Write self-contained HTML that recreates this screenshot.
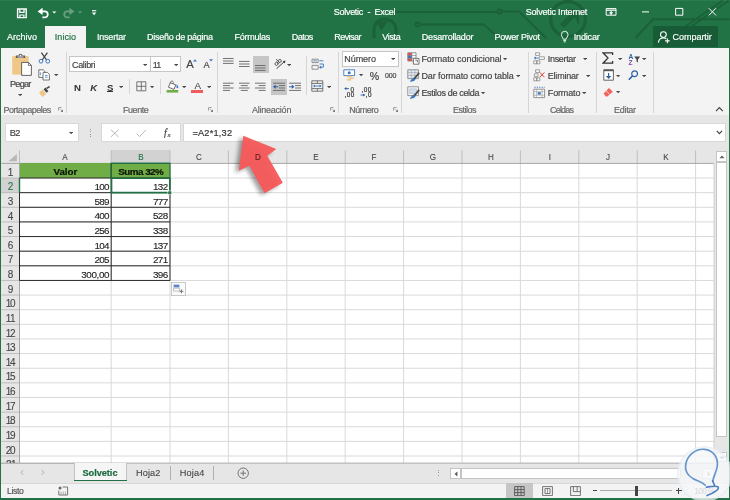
<!DOCTYPE html>
<html><head><meta charset="utf-8"><title>Solvetic - Excel</title>
<style>
html,body{margin:0;padding:0}
body{width:730px;height:500px;overflow:hidden;position:relative;background:#217346;font-family:"Liberation Sans",sans-serif}
#app{position:absolute;left:0;top:0;width:730px;height:500px;overflow:hidden;will-change:transform}
#app div,#app svg,#app span.t{position:absolute;box-sizing:border-box}
span.t{white-space:pre;-webkit-text-stroke:0.18px currentColor}
</style></head>
<body><div id="app">
<div style="left:0px;top:0px;width:730px;height:48.2px;background:#217346;"></div>
<div style="left:0px;top:0px;width:730px;height:1px;background:#2b7c50;"></div>
<svg style="left:0px;top:0px;" width="730" height="48" viewBox="0 0 730 48"><g fill="none" stroke="#1b6139" stroke-width="2" stroke-linecap="round">
<path d="M396 12H497"/><circle cx="499.5" cy="11.5" r="2" />
<path d="M502 11.5H519L546 38"/>
<path d="M420 24.6H484L499 38"/><circle cx="417.5" cy="24.6" r="2"/>
<path d="M653 19.2H729"/><path d="M653 19.2L636 37.5"/>
<path d="M728 1L692 26"/><path d="M722 1L686 26"/>
</g>
<g fill="none" stroke="#1b6139" stroke-width="3.2">
<path d="M374 38V30A11 11 0 0 1 396 30V38"/>
<circle cx="568" cy="19" r="17.4"/>
</g>
<g fill="#1b6139"><path d="M377 22L388 21L381 31Z"/><path d="M563 9H579V25L574.5 17L564 28L560 24L571 13.5Z"/></g>
</svg>
<svg style="left:0px;top:0px;" width="110" height="26" viewBox="0 0 110 26"><g fill="none" stroke="#fff" stroke-width="1.4">
<path d="M17.6 9H26.2V17.6H17.6Z"/><path d="M19.8 9.4V12.4H24V9.4" stroke-width="1.3"/><path d="M19.9 17.4V15H23.9V17.4" stroke-width="1.2"/>
</g>
<path d="M19.4 9H24.4V12.4H19.4Z" fill="none"/>
<g fill="none" stroke="#fff" stroke-width="1.7" stroke-linejoin="miter">
<path d="M40 11.4H44.6A3.2 3 0 0 1 44.6 17.4H42.4"/>
</g>
<path d="M37.6 11.4L42.6 7.8V15Z" fill="#fff"/>
<g opacity="0.32">
<path d="M72 11.4H67.4A3.2 3 0 0 0 67.4 17.4H69.6" fill="none" stroke="#fff" stroke-width="1.7"/>
<path d="M74.4 11.4L69.4 7.8V15Z" fill="#fff"/>
<path d="M78.2 11.4H82L80.1 13.4Z" fill="#fff"/>
</g>
<path d="M52.2 11.4H56.4L54.3 13.6Z" fill="#fff"/>
<path d="M92 10.7H96.2" stroke="#fff" stroke-width="1.1" fill="none"/>
<path d="M91.9 12.5H96.3L94.1 15.3Z" fill="#fff"/>
</svg>
<span id="t0" class="t" style="font-size:9px;color:#fff;top:7.1px;line-height:10.8px;letter-spacing:-0.29px;left:333.8px;">Solvetic  -  Excel</span>
<span id="t1" class="t" style="font-size:9px;color:#fff;top:7.1px;line-height:10.8px;letter-spacing:-0.178px;left:525.7px;">Solvetic Internet</span>
<svg style="left:0px;top:0px;" width="730" height="26" viewBox="0 0 730 26"><g fill="none" stroke="#fff" stroke-width="1">
<path d="M606.2 8.6H616V15.2H606.2Z"/><path d="M606.2 10.2H616" stroke-width="1.2"/>
<path d="M642 11.9H649"/>
<path d="M675.6 8.4H682.8V15.2H675.6Z"/>
<path d="M708.8 8.2L716 15.4M716 8.2L708.8 15.4"/>
</g>
<path d="M611.1 10.9L613.4 13.2H612V14.4H610.2V13.2H608.8Z" fill="#fff"/>
</svg>
<div style="left:45.2px;top:26.2px;width:40.8px;height:22.2px;background:#f3f3f3;"></div>
<span id="t2" class="t" style="font-size:9px;color:#fff;top:32.2px;line-height:10.8px;letter-spacing:-0.003px;left:7px;">Archivo</span>
<span id="t3" class="t" style="font-size:9px;color:#217346;top:32.2px;line-height:10.8px;letter-spacing:0.037px;left:54.8px;">Inicio</span>
<span id="t4" class="t" style="font-size:9px;color:#fff;top:32.2px;line-height:10.8px;letter-spacing:-0.188px;left:96.9px;">Insertar</span>
<span id="t5" class="t" style="font-size:9px;color:#fff;top:32.2px;line-height:10.8px;letter-spacing:-0.271px;left:147px;">Diseño de página</span>
<span id="t6" class="t" style="font-size:9px;color:#fff;top:32.2px;line-height:10.8px;letter-spacing:-0.245px;left:234.5px;">Fórmulas</span>
<span id="t7" class="t" style="font-size:9px;color:#fff;top:32.2px;line-height:10.8px;letter-spacing:-0.504px;left:291.8px;">Datos</span>
<span id="t8" class="t" style="font-size:9px;color:#fff;top:32.2px;line-height:10.8px;letter-spacing:-0.569px;left:334.3px;">Revisar</span>
<span id="t9" class="t" style="font-size:9px;color:#fff;top:32.2px;line-height:10.8px;letter-spacing:-0.34px;left:382.3px;">Vista</span>
<span id="t10" class="t" style="font-size:9px;color:#fff;top:32.2px;line-height:10.8px;letter-spacing:-0.194px;left:421.8px;">Desarrollador</span>
<span id="t11" class="t" style="font-size:9px;color:#fff;top:32.2px;line-height:10.8px;letter-spacing:-0.243px;left:494.4px;">Power Pivot</span>
<span id="t12" class="t" style="font-size:9px;color:#fff;top:32.2px;line-height:10.8px;letter-spacing:-0.186px;left:573.8px;">Indicar</span>
<svg style="left:559px;top:30px;" width="12" height="14" viewBox="0 0 12 14"><g fill="none" stroke="#fff" stroke-width="0.9"><path d="M4.2 9.2C4.2 7.6 2.4 6.8 2.4 4.6A3.3 3.3 0 0 1 9 4.6C9 6.8 7.2 7.6 7.2 9.2Z"/><path d="M4.3 10.6H7.1M4.7 11.9H6.7"/></g></svg>
<div style="left:653.3px;top:26.4px;width:64.3px;height:20.8px;background:#185c37;"></div>
<svg style="left:657px;top:30px;" width="14" height="14" viewBox="0 0 14 14"><g fill="none" stroke="#fff" stroke-width="1.1"><circle cx="6.4" cy="4.6" r="2.9"/><path d="M1.4 12.6C1.8 9.6 3.6 8 6.4 8C7.6 8 8.6 8.3 9.3 8.9"/><path d="M10.4 8.6V13.2M8.1 10.9H12.7"/></g></svg>
<span id="t13" class="t" style="font-size:9px;color:#fff;top:32.2px;line-height:10.8px;letter-spacing:-0.027px;left:672.5px;">Compartir</span>
<div style="left:1.3px;top:48.2px;width:727.5px;height:66.6px;background:#f3f3f3;"></div>
<div style="left:1.3px;top:114.6px;width:727.5px;height:0.9px;background:#d8d8d8;"></div>
<div style="left:1.3px;top:115.4px;width:727.5px;height:368px;background:#e6e6e6;"></div>
<div style="left:65.5px;top:51.6px;width:1px;height:61px;background:#d6d6d6;"></div>
<div style="left:217.0px;top:51.6px;width:1px;height:61px;background:#d6d6d6;"></div>
<div style="left:337.9px;top:51.6px;width:1px;height:61px;background:#d6d6d6;"></div>
<div style="left:401.2px;top:51.6px;width:1px;height:61px;background:#d6d6d6;"></div>
<div style="left:527.5px;top:51.6px;width:1px;height:61px;background:#d6d6d6;"></div>
<div style="left:595.8px;top:51.6px;width:1px;height:61px;background:#d6d6d6;"></div>
<div style="left:652.5px;top:51.6px;width:1px;height:61px;background:#d6d6d6;"></div>
<div style="left:129.1px;top:78.7px;width:1px;height:15.799999999999997px;background:#d6d6d6;"></div>
<div style="left:160.3px;top:78.7px;width:1px;height:15.799999999999997px;background:#d6d6d6;"></div>
<div style="left:305.7px;top:55.7px;width:1px;height:39.3px;background:#d6d6d6;"></div>
<span id="t14" class="t" style="font-size:9px;color:#666;top:104.9px;line-height:10.8px;letter-spacing:-0.495px;left:3.6px;">Portapapeles</span>
<span id="t15" class="t" style="font-size:9px;color:#666;top:104.9px;line-height:10.8px;letter-spacing:-0.446px;left:123px;">Fuente</span>
<span id="t16" class="t" style="font-size:9px;color:#666;top:104.9px;line-height:10.8px;letter-spacing:-0.237px;left:252px;">Alineación</span>
<span id="t17" class="t" style="font-size:9px;color:#666;top:104.9px;line-height:10.8px;letter-spacing:-0.523px;left:349.3px;">Número</span>
<span id="t18" class="t" style="font-size:9px;color:#666;top:104.9px;line-height:10.8px;letter-spacing:-0.503px;left:453px;">Estilos</span>
<span id="t19" class="t" style="font-size:9px;color:#666;top:104.9px;line-height:10.8px;letter-spacing:-0.803px;left:550px;">Celdas</span>
<span id="t20" class="t" style="font-size:9px;color:#666;top:104.9px;line-height:10.8px;letter-spacing:-0.323px;left:614.1px;">Editar</span>
<svg style="left:57.6px;top:107px;" width="6" height="6" viewBox="0 0 6 6"><g fill="none" stroke="#777" stroke-width="0.7"><path d="M0.6 3.6V0.6H3.6"/><path d="M2.4 2.4L4.6 4.6"/></g><path d="M5 2.6V5H2.6Z" fill="#777"/></svg>
<svg style="left:208.4px;top:107px;" width="6" height="6" viewBox="0 0 6 6"><g fill="none" stroke="#777" stroke-width="0.7"><path d="M0.6 3.6V0.6H3.6"/><path d="M2.4 2.4L4.6 4.6"/></g><path d="M5 2.6V5H2.6Z" fill="#777"/></svg>
<svg style="left:329.8px;top:107px;" width="6" height="6" viewBox="0 0 6 6"><g fill="none" stroke="#777" stroke-width="0.7"><path d="M0.6 3.6V0.6H3.6"/><path d="M2.4 2.4L4.6 4.6"/></g><path d="M5 2.6V5H2.6Z" fill="#777"/></svg>
<svg style="left:393.4px;top:107px;" width="6" height="6" viewBox="0 0 6 6"><g fill="none" stroke="#777" stroke-width="0.7"><path d="M0.6 3.6V0.6H3.6"/><path d="M2.4 2.4L4.6 4.6"/></g><path d="M5 2.6V5H2.6Z" fill="#777"/></svg>
<svg style="left:714.5px;top:106px;" width="9" height="7" viewBox="0 0 9 7"><path d="M1 5.2L4.4 1.6L7.8 5.2" fill="none" stroke="#444" stroke-width="1.2"/></svg>
<svg style="left:11px;top:53.4px;" width="22" height="24" viewBox="0 0 22 24"><path d="M1.2 3.2H17.6V21.6H1.2Z" fill="#efc887"/>
<path d="M4.8 5V2.6H7.6A1.9 1.9 0 0 1 11.4 2.6H14.2V5Z" fill="#5f5f5f"/><circle cx="9.5" cy="2.6" r="0.9" fill="#f3f3f3"/><path d="M6.4 4H12.6" stroke="#f3f3f3" stroke-width="0.8"/>
<path d="M10.6 9.4H17.4L20.4 12.4V22.4H10.6Z" fill="#fff" stroke="#555" stroke-width="0.9"/>
<path d="M17.4 9.4V12.4H20.4" fill="none" stroke="#555" stroke-width="0.8"/></svg>
<span id="t21" class="t" style="font-size:9.2px;color:#444;top:79.38px;line-height:11.04px;letter-spacing:-0.783px;left:10px;">Pegar</span>
<svg style="left:17.88px;top:94.1px;" width="4.232" height="2.208" viewBox="0 0 4.232 2.208"><path d="M0 0H4.232L2.116 2.208Z" fill="#484848"/></svg>
<svg style="left:37.5px;top:52.4px;" width="13" height="12" viewBox="0 0 13 12"><g fill="none" stroke-width="1"><path d="M3.4 0.6L8.6 8M9.4 0.6L4.2 8" stroke="#444" stroke-width="1.3"/><circle cx="3" cy="9.2" r="1.9" stroke="#3b78c0"/><circle cx="9.8" cy="9.2" r="1.9" stroke="#3b78c0"/></g></svg>
<svg style="left:37.5px;top:69.4px;" width="13" height="12" viewBox="0 0 13 12"><g fill="#fff" stroke="#555" stroke-width="0.8"><path d="M0.8 0.8H5.2L7 2.6V8.4H0.8Z"/><path d="M5 3.4H9.4L11.4 5.4V11H5Z"/></g><path d="M2.4 3.4V6.2M7 6.4H9.6M7 8.2H9.6" stroke="#3b78c0" stroke-width="0.8" fill="none"/></svg>
<svg style="left:53.88px;top:74.1px;" width="4.232" height="2.208" viewBox="0 0 4.232 2.208"><path d="M0 0H4.232L2.116 2.208Z" fill="#484848"/></svg>
<svg style="left:37.5px;top:86.4px;" width="13" height="12" viewBox="0 0 13 12"><path d="M1 6.6L4.8 3.6L8.2 8L4.4 11Z" fill="#efc887"/><path d="M5.6 3.2L7.6 1.6L10.4 5.2L8.4 6.8Z" fill="#444"/><path d="M8.6 2.4L11.6 0.6" stroke="#444" stroke-width="1.6"/></svg>
<div style="left:69.4px;top:56.2px;width:81.4px;height:16.2px;background:#fff;border:1px solid #c6c6c6;"></div>
<div style="left:150px;top:56.2px;width:31.4px;height:16.2px;background:#fff;border:1px solid #c6c6c6;"></div>
<span id="t22" class="t" style="font-size:9px;color:#444;top:59.9px;line-height:10.8px;letter-spacing:-0.336px;left:72px;">Calibri</span>
<svg style="left:142.58px;top:63.7px;" width="4.232" height="2.208" viewBox="0 0 4.232 2.208"><path d="M0 0H4.232L2.116 2.208Z" fill="#484848"/></svg>
<span id="t23" class="t" style="font-size:9px;color:#444;top:59.9px;line-height:10.8px;letter-spacing:-0.944px;left:152.8px;">11</span>
<svg style="left:173.88px;top:63.7px;" width="4.232" height="2.208" viewBox="0 0 4.232 2.208"><path d="M0 0H4.232L2.116 2.208Z" fill="#484848"/></svg>
<span id="t24" class="t" style="font-size:11.2px;color:#444;top:58.38px;line-height:13.44px;letter-spacing:0.131px;left:186.2px;">A</span>
<svg style="left:193.4px;top:58.6px;" width="4" height="3" viewBox="0 0 4 3"><path d="M0 2.6L2 0.2L4 2.6Z" fill="#3b78c0"/></svg>
<span id="t25" class="t" style="font-size:9.2px;color:#444;top:60.38px;line-height:11.04px;letter-spacing:-0.141px;left:203.4px;">A</span>
<svg style="left:209.2px;top:58.8px;" width="4" height="3" viewBox="0 0 4 3"><path d="M0 0.2H4L2 2.6Z" fill="#3b78c0"/></svg>
<span id="t26" class="t" style="font-size:9.6px;color:#333;top:81.74px;line-height:11.52px;font-weight:bold;letter-spacing:0.062px;left:74px;-webkit-text-stroke:0;">N</span>
<span id="t27" class="t" style="font-size:9.6px;color:#333;top:81.74px;line-height:11.52px;font-weight:bold;font-style:italic;letter-spacing:-0.537px;left:90.2px;-webkit-text-stroke:0;">K</span>
<span id="t28" class="t" style="font-size:9.6px;color:#333;top:81.54px;line-height:11.52px;font-weight:bold;letter-spacing:-0.806px;left:107px;-webkit-text-stroke:0;">S</span>
<div style="left:106.6px;top:91.4px;width:6.2px;height:1px;background:#333;"></div>
<svg style="left:119.28px;top:85.9px;" width="4.232" height="2.208" viewBox="0 0 4.232 2.208"><path d="M0 0H4.232L2.116 2.208Z" fill="#484848"/></svg>
<svg style="left:135.8px;top:81.1px;" width="11" height="11" viewBox="0 0 11 11"><g fill="none" stroke="#666" stroke-width="0.9"><path d="M0.8 0.8H9.8V9.8H0.8Z"/><path d="M5.3 0.8V9.8M0.8 5.3H9.8"/></g></svg>
<svg style="left:150.48px;top:85.9px;" width="4.232" height="2.208" viewBox="0 0 4.232 2.208"><path d="M0 0H4.232L2.116 2.208Z" fill="#484848"/></svg>
<svg style="left:166px;top:80.4px;" width="13" height="13" viewBox="0 0 13 13"><path d="M4.4 2.8L9.8 4.9L8 9.4L2.4 7.2Z" fill="#fff" stroke="#5a5a5a" stroke-width="0.9" stroke-linejoin="round"/><path d="M4.2 3.4C4 1.6 5.4 0.6 6.6 1.2C7.4 1.6 7.4 2.6 7.2 3.6" fill="none" stroke="#5a5a5a" stroke-width="0.8"/><path d="M10.2 4.2C11.8 5 12.6 6.6 12.2 8C11.6 8.4 10.8 8 10.4 7.4C10.8 6.4 10.6 5.2 10.2 4.2Z" fill="#3b78c0"/><path d="M0.6 10H12.2V12.6H0.6Z" fill="#70ad47"/></svg>
<svg style="left:182.08px;top:85.9px;" width="4.232" height="2.208" viewBox="0 0 4.232 2.208"><path d="M0 0H4.232L2.116 2.208Z" fill="#484848"/></svg>
<span id="t29" class="t" style="font-size:9.8px;color:#444;top:80.42px;line-height:11.76px;left:194.4px;-webkit-text-stroke:0.05px currentColor;">A</span>
<div style="left:191.2px;top:90.2px;width:11.8px;height:2.6px;background:#f15b5b;"></div>
<svg style="left:207.28px;top:85.9px;" width="4.232" height="2.208" viewBox="0 0 4.232 2.208"><path d="M0 0H4.232L2.116 2.208Z" fill="#484848"/></svg>
<div style="left:252.8px;top:56.2px;width:16px;height:16.4px;background:#c6c6c6;"></div>
<div style="left:270.8px;top:78.7px;width:16.2px;height:16.8px;background:#c6c6c6;"></div>
<svg style="left:223.2px;top:56px;" width="11" height="16" viewBox="0 0 11 16"><g fill="none" stroke="#6a6a6a" stroke-width="0.95"><path d="M0 2.5H10.6"/><path d="M0 5H10.6"/><path d="M0 7.4H10.6"/></g></svg>
<svg style="left:239.3px;top:56px;" width="11" height="16" viewBox="0 0 11 16"><g fill="none" stroke="#6a6a6a" stroke-width="0.95"><path d="M0 5.4H10.6"/><path d="M0 8H10.6"/><path d="M0 10.5H10.6"/></g></svg>
<svg style="left:255.4px;top:56px;" width="11" height="16" viewBox="0 0 11 16"><g fill="none" stroke="#6a6a6a" stroke-width="0.95"><path d="M0 9.5H10.6"/><path d="M0 12H10.6"/><path d="M0 14.4H10.6"/></g></svg>
<svg style="left:272.6px;top:57px;" width="14" height="14" viewBox="0 0 14 14"><path d="M3.6 11.6L11.6 4.4" stroke="#444" stroke-width="1" fill="none"/><path d="M12.6 3.4L9.6 4.2L11.8 6.4Z" fill="#444"/><g fill="none" stroke="#444" stroke-width="0.8" transform="rotate(-42 5 5)"><circle cx="2.6" cy="5.4" r="1.5"/><path d="M4.1 3.6V7"/><path d="M5.6 1.6V7"/><circle cx="7.1" cy="5.4" r="1.5"/></g></svg>
<svg style="left:287.28px;top:63.7px;" width="4.232" height="2.208" viewBox="0 0 4.232 2.208"><path d="M0 0H4.232L2.116 2.208Z" fill="#484848"/></svg>
<svg style="left:310.6px;top:57.6px;" width="14" height="13" viewBox="0 0 14 13"><g fill="none" stroke="#777" stroke-width="0.8"><path d="M1 1.2H7.2V4.6H1Z"/><path d="M1 7.4H7.2V11.2H1Z"/></g><path d="M8.4 2.8H12.4M8.4 6H12.4V9.2H9.8" fill="none" stroke="#3b78c0" stroke-width="0.9"/><path d="M8 9.2L10.2 7.4V11Z" fill="#3b78c0"/><path d="M2.2 2.9H6" stroke="#3b78c0" stroke-width="0.8"/></svg>
<svg style="left:223.2px;top:80px;" width="11" height="14" viewBox="0 0 11 14"><g fill="none" stroke="#6a6a6a" stroke-width="0.95"><path d="M0 3.2H10.6"/><path d="M0 5.6H7"/><path d="M0 8H10.6"/><path d="M0 10.4H7"/></g></svg>
<svg style="left:239.3px;top:80px;" width="11" height="14" viewBox="0 0 11 14"><g fill="none" stroke="#6a6a6a" stroke-width="0.95"><path d="M0 3.2H10.6"/><path d="M1.8 5.6H8.8"/><path d="M0 8H10.6"/><path d="M1.8 10.4H8.8"/></g></svg>
<svg style="left:255.3px;top:80px;" width="11" height="14" viewBox="0 0 11 14"><g fill="none" stroke="#6a6a6a" stroke-width="0.95"><path d="M0 3.2H10.6"/><path d="M3.6 5.6H10.6"/><path d="M0 8H10.6"/><path d="M3.6 10.4H10.6"/></g></svg>
<svg style="left:272.6px;top:80px;" width="13" height="14" viewBox="0 0 13 14"><g fill="none" stroke="#6a6a6a" stroke-width="0.95"><path d="M0 3.2H12"/><path d="M6 5.6H12"/><path d="M6 8H12"/><path d="M0 10.4H12"/></g><path d="M1.2 6.8H5.4" stroke="#2b5fa6" stroke-width="1"/><path d="M0 6.8L2.6 4.6V9Z" fill="#2b5fa6"/></svg>
<svg style="left:289.2px;top:80px;" width="13" height="14" viewBox="0 0 13 14"><g fill="none" stroke="#6a6a6a" stroke-width="0.95"><path d="M0 3.2H12"/><path d="M6 5.6H12"/><path d="M6 8H12"/><path d="M0 10.4H12"/></g><path d="M0 6.8H4" stroke="#2b5fa6" stroke-width="1"/><path d="M5.4 6.8L2.8 4.6V9Z" fill="#2b5fa6"/></svg>
<svg style="left:311px;top:80.4px;" width="13" height="12" viewBox="0 0 13 12"><g fill="none" stroke="#666" stroke-width="0.9"><path d="M0.8 0.8H11.8V11.2H0.8Z"/><path d="M0.8 3.4H11.8M0.8 8.6H11.8M6.3 0.8V3.4M6.3 8.6V11.2"/></g><path d="M3 6H9.6" stroke="#3b78c0" stroke-width="0.9"/><path d="M2 6L4 4.6V7.4ZM10.6 6L8.6 4.6V7.4Z" fill="#3b78c0"/></svg>
<svg style="left:326.88px;top:85.9px;" width="4.232" height="2.208" viewBox="0 0 4.232 2.208"><path d="M0 0H4.232L2.116 2.208Z" fill="#484848"/></svg>
<div style="left:341.9px;top:50.8px;width:56.8px;height:15.8px;background:#fff;border:1px solid #c6c6c6;"></div>
<span id="t30" class="t" style="font-size:9px;color:#444;top:54.3px;line-height:10.8px;letter-spacing:-0.083px;left:344.3px;">Número</span>
<svg style="left:391.08px;top:58.1px;" width="4.232" height="2.208" viewBox="0 0 4.232 2.208"><path d="M0 0H4.232L2.116 2.208Z" fill="#484848"/></svg>
<svg style="left:343.4px;top:69px;" width="13" height="12" viewBox="0 0 13 12"><path d="M0.8 0.8H11.6V6.6H0.8Z" fill="#fff" stroke="#3b78c0" stroke-width="0.9"/><circle cx="6.2" cy="3.7" r="1.5" fill="#3b78c0"/><g fill="#efc887"><ellipse cx="6" cy="7.6" rx="2.6" ry="0.9"/><ellipse cx="8.6" cy="9.2" rx="2.6" ry="0.9"/><ellipse cx="6" cy="10.8" rx="2.6" ry="0.9"/></g></svg>
<svg style="left:359.48px;top:74.3px;" width="4.232" height="2.208" viewBox="0 0 4.232 2.208"><path d="M0 0H4.232L2.116 2.208Z" fill="#484848"/></svg>
<span id="t31" class="t" style="font-size:10.6px;color:#444;top:69.94px;line-height:12.72px;letter-spacing:-0.022px;left:369.8px;">%</span>
<span id="t32" class="t" style="font-size:7px;color:#444;top:71.7px;line-height:8.4px;letter-spacing:-0.144px;left:385px;">000</span>
<svg style="left:343.6px;top:86.4px;" width="12" height="12" viewBox="0 0 12 12"><path d="M1.6 2.6H5" stroke="#2b5fa6" stroke-width="0.9"/><path d="M0.2 2.6L2.4 1V4.2Z" fill="#2b5fa6"/></svg>
<span id="t33" class="t" style="font-size:6.4px;color:#333;top:86.26px;line-height:7.68px;letter-spacing:0.438px;left:350.4px;">0</span>
<span id="t34" class="t" style="font-size:6.4px;color:#333;top:91.46px;line-height:7.68px;letter-spacing:0.555px;left:344.4px;">,00</span>
<svg style="left:360px;top:86.4px;" width="12" height="12" viewBox="0 0 12 12"><path d="M0.6 9H4" stroke="#2b5fa6" stroke-width="0.9"/><path d="M5.4 9L3.2 7.4V10.6Z" fill="#2b5fa6"/></svg>
<span id="t35" class="t" style="font-size:6.4px;color:#333;top:86.26px;line-height:7.68px;letter-spacing:0.555px;left:361.4px;">,00</span>
<span id="t36" class="t" style="font-size:6.4px;color:#333;top:91.46px;line-height:7.68px;letter-spacing:0.656px;left:365.6px;">,0</span>
<svg style="left:406.8px;top:52px;" width="13" height="13" viewBox="0 0 13 13"><path d="M0.8 0.8H9V9H0.8Z" fill="#fff" stroke="#777" stroke-width="0.8"/><path d="M0.8 0.8H4.9V3.5H0.8Z" fill="#d9534f"/><path d="M0.8 3.5H4.9V6.2H0.8Z" fill="#3b78c0"/><path d="M0.8 6.2H4.9V9H0.8Z" fill="#d9534f"/><path d="M4.9 0.8V9M0.8 3.5H9M0.8 6.2H9" stroke="#777" stroke-width="0.6" fill="none"/><path d="M6.4 6.4H12V12.2H6.4Z" fill="#fff" stroke="#555" stroke-width="0.8"/><path d="M8.2 8.2H10.4V10.4" fill="none" stroke="#555" stroke-width="0.8"/></svg>
<svg style="left:406.8px;top:69px;" width="13" height="13" viewBox="0 0 13 13"><path d="M0.8 0.8H11.4V9.6H0.8Z" fill="#e4eef8" stroke="#777" stroke-width="0.8"/><path d="M0.8 3.6H11.4M0.8 6.4H11.4M4.2 0.8V9.6M7.8 0.8V9.6" stroke="#999" stroke-width="0.6" fill="none"/><path d="M6.4 9.2L11.6 3.2L12.8 4.4L7.8 10.4Z" fill="#4a4a4a"/><path d="M2.8 12.9C3.6 11.4 4.6 9.6 6.4 8.4L8.6 10.6C7.4 12.2 5.4 12.8 2.8 12.9Z" fill="#3b78c0"/></svg>
<svg style="left:406.8px;top:85.8px;" width="13" height="13" viewBox="0 0 13 13"><path d="M0.8 0.8H11.4V9.6H0.8Z" fill="#fff" stroke="#777" stroke-width="0.8"/><path d="M2.6 2.8H9.6V7.6H2.6Z" fill="#cfdff0" stroke="#9ab" stroke-width="0.5"/><path d="M6.4 9.2L11.6 3.2L12.8 4.4L7.8 10.4Z" fill="#4a4a4a"/><path d="M2.8 12.9C3.6 11.4 4.6 9.6 6.4 8.4L8.6 10.6C7.4 12.2 5.4 12.8 2.8 12.9Z" fill="#3b78c0"/></svg>
<span id="t37" class="t" style="font-size:9px;color:#444;top:54.1px;line-height:10.8px;letter-spacing:-0.047px;left:421.4px;">Formato condicional</span>
<svg style="left:503.48px;top:58.1px;" width="4.232" height="2.208" viewBox="0 0 4.232 2.208"><path d="M0 0H4.232L2.116 2.208Z" fill="#484848"/></svg>
<span id="t38" class="t" style="font-size:9px;color:#444;top:70.9px;line-height:10.8px;letter-spacing:-0.078px;left:421.4px;">Dar formato como tabla</span>
<svg style="left:515.88px;top:74.9px;" width="4.232" height="2.208" viewBox="0 0 4.232 2.208"><path d="M0 0H4.232L2.116 2.208Z" fill="#484848"/></svg>
<span id="t39" class="t" style="font-size:9px;color:#444;top:87.7px;line-height:10.8px;letter-spacing:-0.336px;left:421.4px;">Estilos de celda</span>
<svg style="left:481.38px;top:91.7px;" width="4.232" height="2.208" viewBox="0 0 4.232 2.208"><path d="M0 0H4.232L2.116 2.208Z" fill="#484848"/></svg>
<svg style="left:533px;top:52px;" width="13" height="13" viewBox="0 0 13 13"><g fill="#fff" stroke="#777" stroke-width="0.7"><path d="M2.6 0.8H6.6V3.4H2.6Z"/><path d="M6.2 4.8H11.4V7.4H6.2Z"/><path d="M0.8 8.8H3.8V11.8H0.8ZM3.8 8.8H6.8V11.8H3.8Z"/></g><path d="M2 6.1H5.6" stroke="#3b78c0" stroke-width="0.9"/><path d="M0.6 6.1L2.8 4.6V7.6Z" fill="#3b78c0"/></svg>
<svg style="left:533px;top:69px;" width="13" height="13" viewBox="0 0 13 13"><g fill="#fff" stroke="#777" stroke-width="0.7"><path d="M2.6 0.8H6.6V3.4H2.6Z"/><path d="M0.8 8.8H3.8V11.8H0.8ZM3.8 8.8H6.8V11.8H3.8Z"/><path d="M1.4 4.8H5V7.4H1.4Z"/></g><path d="M6.8 3.4L11.4 8.2M11.4 3.4L6.8 8.2" stroke="#e0443a" stroke-width="1" fill="none"/></svg>
<svg style="left:533px;top:85.6px;" width="13" height="13" viewBox="0 0 13 13"><path d="M1.4 1.2H2.6M3.8 1.2H5M6.2 1.2H7.4M8.6 1.2H9.8M10.8 1.2H11.6" stroke="#3b78c0" stroke-width="1.1"/><path d="M0.8 3.2H11.6V11.6H0.8Z" fill="#fff" stroke="#777" stroke-width="0.8"/><path d="M0.8 5.6H11.6M0.8 9.2H11.6M3.4 3.2V11.6M9 3.2V11.6" stroke="#999" stroke-width="0.6" fill="none"/><path d="M4.6 6.2H7.8V8.6H4.6Z" fill="#3b78c0"/></svg>
<span id="t40" class="t" style="font-size:9px;color:#444;top:54.1px;line-height:10.8px;letter-spacing:-0.331px;left:547.8px;">Insertar</span>
<svg style="left:582.68px;top:58.1px;" width="4.232" height="2.208" viewBox="0 0 4.232 2.208"><path d="M0 0H4.232L2.116 2.208Z" fill="#484848"/></svg>
<span id="t41" class="t" style="font-size:9px;color:#444;top:70.9px;line-height:10.8px;letter-spacing:-0.217px;left:547.8px;">Eliminar</span>
<svg style="left:585.68px;top:74.9px;" width="4.232" height="2.208" viewBox="0 0 4.232 2.208"><path d="M0 0H4.232L2.116 2.208Z" fill="#484848"/></svg>
<span id="t42" class="t" style="font-size:9px;color:#444;top:87.7px;line-height:10.8px;letter-spacing:-0.153px;left:547.8px;">Formato</span>
<svg style="left:582.18px;top:91.7px;" width="4.232" height="2.208" viewBox="0 0 4.232 2.208"><path d="M0 0H4.232L2.116 2.208Z" fill="#484848"/></svg>
<svg style="left:602px;top:52px;" width="12" height="12" viewBox="0 0 12 12"><path d="M10.6 3V0.8H1L6 6L1 11.2H10.6V9" fill="none" stroke="#333" stroke-width="1.3"/></svg>
<svg style="left:617.78px;top:58.1px;" width="4.232" height="2.208" viewBox="0 0 4.232 2.208"><path d="M0 0H4.232L2.116 2.208Z" fill="#484848"/></svg>
<svg style="left:602.6px;top:69px;" width="12" height="12" viewBox="0 0 12 12"><path d="M0.8 0.8H10.4V11.2H0.8Z" fill="#fff" stroke="#555" stroke-width="0.9"/><path d="M0.8 1.4H10.4" stroke="#555" stroke-width="1.6"/><path d="M5.6 4V8" stroke="#2b5fa6" stroke-width="1.2"/><path d="M2.8 7L5.6 10L8.4 7Z" fill="#2b5fa6"/></svg>
<svg style="left:616.48px;top:74.9px;" width="4.232" height="2.208" viewBox="0 0 4.232 2.208"><path d="M0 0H4.232L2.116 2.208Z" fill="#484848"/></svg>
<svg style="left:603px;top:86.6px;" width="11" height="10" viewBox="0 0 11 10"><path d="M0.6 6.4L6 1L9.8 4.8L4.4 9.6H2.8Z" fill="#f1625d"/><path d="M3.4 4L6.6 7.4" stroke="#fff" stroke-width="0.7"/></svg>
<svg style="left:616.48px;top:91.3px;" width="4.232" height="2.208" viewBox="0 0 4.232 2.208"><path d="M0 0H4.232L2.116 2.208Z" fill="#484848"/></svg>
<span id="t43" class="t" style="font-size:6.6px;color:#2b5fa6;top:52.54px;line-height:7.92px;font-weight:bold;letter-spacing:-0.166px;left:628.6px;-webkit-text-stroke:0;">A</span>
<span id="t44" class="t" style="font-size:6.6px;color:#7a4fa0;top:58.54px;line-height:7.92px;font-weight:bold;letter-spacing:0.169px;left:628.6px;-webkit-text-stroke:0;">Z</span>
<svg style="left:633.6px;top:55.6px;" width="7" height="7" viewBox="0 0 7 7"><path d="M0.2 0.6H6.2L3.9 3.4V6.4L2.5 5.6V3.4Z" fill="#444"/></svg>
<svg style="left:642.08px;top:58.1px;" width="4.232" height="2.208" viewBox="0 0 4.232 2.208"><path d="M0 0H4.232L2.116 2.208Z" fill="#484848"/></svg>
<svg style="left:628px;top:70px;" width="11" height="11" viewBox="0 0 11 11"><circle cx="6.6" cy="3.8" r="2.9" fill="none" stroke="#2b5fa6" stroke-width="1.2"/><path d="M4.4 6L0.8 9.8" stroke="#2b5fa6" stroke-width="1.6"/></svg>
<svg style="left:642.08px;top:74.9px;" width="4.232" height="2.208" viewBox="0 0 4.232 2.208"><path d="M0 0H4.232L2.116 2.208Z" fill="#484848"/></svg>
<div style="left:4.6px;top:123.4px;width:74px;height:19px;background:#fff;border:1px solid #d8d8d8;"></div>
<span id="t45" class="t" style="font-size:9.2px;color:#444;top:127.78px;line-height:11.04px;letter-spacing:-0.65px;left:9.8px;">B2</span>
<svg style="left:68.88px;top:131.7px;" width="4.232" height="2.208" viewBox="0 0 4.232 2.208"><path d="M0 0H4.232L2.116 2.208Z" fill="#484848"/></svg>
<div style="left:89.6px;top:128.6px;width:1px;height:1px;background:#999;"></div>
<div style="left:89.6px;top:131.2px;width:1px;height:1px;background:#999;"></div>
<div style="left:89.6px;top:133.8px;width:1px;height:1px;background:#999;"></div>
<div style="left:89.6px;top:136.4px;width:1px;height:1px;background:#999;"></div>
<div style="left:100.6px;top:123.4px;width:80.4px;height:19px;background:#fff;border:1px solid #d8d8d8;"></div>
<svg style="left:109.8px;top:129px;" width="10" height="9" viewBox="0 0 10 9"><path d="M0.8 0.6L8.6 8M8.6 0.6L0.8 8" stroke="#b0b0b0" stroke-width="0.9" fill="none"/></svg>
<svg style="left:135.6px;top:129px;" width="11" height="9" viewBox="0 0 11 9"><path d="M0.8 4.6L3.6 7.6L10 0.8" stroke="#b0b0b0" stroke-width="0.9" fill="none"/></svg>
<span id="t46" class="t" style="font-size:10px;color:#444;top:127.3px;line-height:12.0px;font-style:italic;left:164px;font-family:'Liberation Serif',serif;">f</span>
<span id="t47" class="t" style="font-size:7px;color:#444;top:131.1px;line-height:8.4px;font-style:italic;left:167.6px;font-family:'Liberation Serif',serif;">x</span>
<div style="left:183.2px;top:123.3px;width:542.8px;height:19.1px;background:#fff;border:1px solid #d8d8d8;"></div>
<span id="t48" class="t" style="font-size:9.2px;color:#333;top:128.38px;line-height:11.04px;letter-spacing:0.22px;left:192.4px;">=A2*1,32</span>
<svg style="left:716px;top:130px;" width="8" height="6" viewBox="0 0 8 6"><path d="M0.8 0.8L3.4 3.6L6 0.8" fill="none" stroke="#444" stroke-width="1.2"/></svg>
<div style="left:19.5px;top:163.4px;width:694.5px;height:299.6px;background:#fff;"></div>
<div style="left:1.3px;top:149.8px;width:712.7px;height:13.599999999999994px;background:#e6e6e6;"></div>
<div style="left:1.3px;top:163.4px;width:18.2px;height:299.6px;background:#e6e6e6;"></div>
<div style="left:111.2px;top:149.8px;width:58.8px;height:13.599999999999994px;background:#d2d2d2;"></div>
<div style="left:1.3px;top:178.03px;width:18.2px;height:14.63px;background:#d2d2d2;"></div>
<svg style="left:0px;top:0px;" width="730" height="500" viewBox="0 0 730 500"><g fill="none" stroke-width="1"><path d="M19.5 178.03H714" stroke="#d9d9d9"/><path d="M19.5 192.66H714" stroke="#d9d9d9"/><path d="M19.5 207.29H714" stroke="#d9d9d9"/><path d="M19.5 221.92H714" stroke="#d9d9d9"/><path d="M19.5 236.55H714" stroke="#d9d9d9"/><path d="M19.5 251.18H714" stroke="#d9d9d9"/><path d="M19.5 265.81H714" stroke="#d9d9d9"/><path d="M19.5 280.44H714" stroke="#d9d9d9"/><path d="M19.5 295.07H714" stroke="#d9d9d9"/><path d="M19.5 309.7H714" stroke="#d9d9d9"/><path d="M19.5 324.33H714" stroke="#d9d9d9"/><path d="M19.5 338.96H714" stroke="#d9d9d9"/><path d="M19.5 353.59H714" stroke="#d9d9d9"/><path d="M19.5 368.22H714" stroke="#d9d9d9"/><path d="M19.5 382.85H714" stroke="#d9d9d9"/><path d="M19.5 397.48H714" stroke="#d9d9d9"/><path d="M19.5 412.11H714" stroke="#d9d9d9"/><path d="M19.5 426.74H714" stroke="#d9d9d9"/><path d="M19.5 441.37H714" stroke="#d9d9d9"/><path d="M19.5 456.0H714" stroke="#d9d9d9"/><path d="M111.2 163.4V463" stroke="#d9d9d9"/><path d="M170 163.4V463" stroke="#d9d9d9"/><path d="M228.4 163.4V463" stroke="#d9d9d9"/><path d="M286.8 163.4V463" stroke="#d9d9d9"/><path d="M345.2 163.4V463" stroke="#d9d9d9"/><path d="M403.6 163.4V463" stroke="#d9d9d9"/><path d="M462 163.4V463" stroke="#d9d9d9"/><path d="M520.4 163.4V463" stroke="#d9d9d9"/><path d="M578.8 163.4V463" stroke="#d9d9d9"/><path d="M637.2 163.4V463" stroke="#d9d9d9"/><path d="M695.6 163.4V463" stroke="#d9d9d9"/><path d="M19.5 150.3V163.4" stroke="#bdbdbd"/><path d="M111.2 150.3V163.4" stroke="#bdbdbd"/><path d="M170 150.3V163.4" stroke="#bdbdbd"/><path d="M228.4 150.3V163.4" stroke="#bdbdbd"/><path d="M286.8 150.3V163.4" stroke="#bdbdbd"/><path d="M345.2 150.3V163.4" stroke="#bdbdbd"/><path d="M403.6 150.3V163.4" stroke="#bdbdbd"/><path d="M462 150.3V163.4" stroke="#bdbdbd"/><path d="M520.4 150.3V163.4" stroke="#bdbdbd"/><path d="M578.8 150.3V163.4" stroke="#bdbdbd"/><path d="M637.2 150.3V163.4" stroke="#bdbdbd"/><path d="M695.6 150.3V163.4" stroke="#bdbdbd"/><path d="M1.3 178.03H19.5" stroke="#bdbdbd"/><path d="M1.3 192.66H19.5" stroke="#bdbdbd"/><path d="M1.3 207.29H19.5" stroke="#bdbdbd"/><path d="M1.3 221.92H19.5" stroke="#bdbdbd"/><path d="M1.3 236.55H19.5" stroke="#bdbdbd"/><path d="M1.3 251.18H19.5" stroke="#bdbdbd"/><path d="M1.3 265.81H19.5" stroke="#bdbdbd"/><path d="M1.3 280.44H19.5" stroke="#bdbdbd"/><path d="M1.3 295.07H19.5" stroke="#bdbdbd"/><path d="M1.3 309.7H19.5" stroke="#bdbdbd"/><path d="M1.3 324.33H19.5" stroke="#bdbdbd"/><path d="M1.3 338.96H19.5" stroke="#bdbdbd"/><path d="M1.3 353.59H19.5" stroke="#bdbdbd"/><path d="M1.3 368.22H19.5" stroke="#bdbdbd"/><path d="M1.3 382.85H19.5" stroke="#bdbdbd"/><path d="M1.3 397.48H19.5" stroke="#bdbdbd"/><path d="M1.3 412.11H19.5" stroke="#bdbdbd"/><path d="M1.3 426.74H19.5" stroke="#bdbdbd"/><path d="M1.3 441.37H19.5" stroke="#bdbdbd"/><path d="M1.3 456.0H19.5" stroke="#bdbdbd"/><path d="M1.3 163.4H714" stroke="#a6a6a6"/><path d="M19.5 163.4V463" stroke="#a6a6a6"/><path d="M714 163.4V463" stroke="#d0d0d0"/><path d="M1.3 463H714" stroke="#bdbdbd"/><path d="M16.9 154.0V161.20000000000002H8.5Z" fill="#b7b7b7"/></g></svg>
<span id="t49" class="t" style="font-size:9.4px;color:#444;top:151.46px;line-height:11.28px;left:-134.65px;width:400px;text-align:center;transform:scaleX(0.86);transform-origin:50% 50%;-webkit-text-stroke:0.1px currentColor;">A</span>
<span id="t50" class="t" style="font-size:9.4px;color:#217346;top:151.46px;line-height:11.28px;left:-59.4px;width:400px;text-align:center;transform:scaleX(0.86);transform-origin:50% 50%;-webkit-text-stroke:0.1px currentColor;">B</span>
<span id="t51" class="t" style="font-size:9.4px;color:#444;top:151.46px;line-height:11.28px;left:-0.8px;width:400px;text-align:center;transform:scaleX(0.86);transform-origin:50% 50%;-webkit-text-stroke:0.1px currentColor;">C</span>
<span id="t52" class="t" style="font-size:9.4px;color:#444;top:151.46px;line-height:11.28px;left:57.6px;width:400px;text-align:center;transform:scaleX(0.86);transform-origin:50% 50%;-webkit-text-stroke:0.1px currentColor;">D</span>
<span id="t53" class="t" style="font-size:9.4px;color:#444;top:151.46px;line-height:11.28px;left:116.0px;width:400px;text-align:center;transform:scaleX(0.86);transform-origin:50% 50%;-webkit-text-stroke:0.1px currentColor;">E</span>
<span id="t54" class="t" style="font-size:9.4px;color:#444;top:151.46px;line-height:11.28px;left:174.4px;width:400px;text-align:center;transform:scaleX(0.86);transform-origin:50% 50%;-webkit-text-stroke:0.1px currentColor;">F</span>
<span id="t55" class="t" style="font-size:9.4px;color:#444;top:151.46px;line-height:11.28px;left:232.8px;width:400px;text-align:center;transform:scaleX(0.86);transform-origin:50% 50%;-webkit-text-stroke:0.1px currentColor;">G</span>
<span id="t56" class="t" style="font-size:9.4px;color:#444;top:151.46px;line-height:11.28px;left:291.2px;width:400px;text-align:center;transform:scaleX(0.86);transform-origin:50% 50%;-webkit-text-stroke:0.1px currentColor;">H</span>
<span id="t57" class="t" style="font-size:9.4px;color:#444;top:151.46px;line-height:11.28px;left:349.6px;width:400px;text-align:center;transform:scaleX(0.86);transform-origin:50% 50%;-webkit-text-stroke:0.1px currentColor;">I</span>
<span id="t58" class="t" style="font-size:9.4px;color:#444;top:151.46px;line-height:11.28px;left:408.0px;width:400px;text-align:center;transform:scaleX(0.86);transform-origin:50% 50%;-webkit-text-stroke:0.1px currentColor;">J</span>
<span id="t59" class="t" style="font-size:9.4px;color:#444;top:151.46px;line-height:11.28px;left:466.4px;width:400px;text-align:center;transform:scaleX(0.86);transform-origin:50% 50%;-webkit-text-stroke:0.1px currentColor;">K</span>
<span id="t60" class="t" style="font-size:10px;color:#444;top:166.61px;line-height:12.0px;letter-spacing:-0.862px;left:-189.83px;width:400px;text-align:center;-webkit-text-stroke:0.1px currentColor;">1</span>
<span id="t61" class="t" style="font-size:10px;color:#217346;top:181.24px;line-height:12.0px;letter-spacing:-0.862px;left:-189.83px;width:400px;text-align:center;-webkit-text-stroke:0.1px currentColor;">2</span>
<span id="t62" class="t" style="font-size:10px;color:#444;top:195.88px;line-height:12.0px;letter-spacing:-0.862px;left:-189.83px;width:400px;text-align:center;-webkit-text-stroke:0.1px currentColor;">3</span>
<span id="t63" class="t" style="font-size:10px;color:#444;top:210.5px;line-height:12.0px;letter-spacing:-0.862px;left:-189.83px;width:400px;text-align:center;-webkit-text-stroke:0.1px currentColor;">4</span>
<span id="t64" class="t" style="font-size:10px;color:#444;top:225.13px;line-height:12.0px;letter-spacing:-0.862px;left:-189.83px;width:400px;text-align:center;-webkit-text-stroke:0.1px currentColor;">5</span>
<span id="t65" class="t" style="font-size:10px;color:#444;top:239.76px;line-height:12.0px;letter-spacing:-0.862px;left:-189.83px;width:400px;text-align:center;-webkit-text-stroke:0.1px currentColor;">6</span>
<span id="t66" class="t" style="font-size:10px;color:#444;top:254.39px;line-height:12.0px;letter-spacing:-0.862px;left:-189.83px;width:400px;text-align:center;-webkit-text-stroke:0.1px currentColor;">7</span>
<span id="t67" class="t" style="font-size:10px;color:#444;top:269.02px;line-height:12.0px;letter-spacing:-0.862px;left:-189.83px;width:400px;text-align:center;-webkit-text-stroke:0.1px currentColor;">8</span>
<span id="t68" class="t" style="font-size:10px;color:#444;top:283.65px;line-height:12.0px;letter-spacing:-0.862px;left:-189.83px;width:400px;text-align:center;-webkit-text-stroke:0.1px currentColor;">9</span>
<span id="t69" class="t" style="font-size:10px;color:#444;top:298.28px;line-height:12.0px;letter-spacing:-1.225px;left:-190.01px;width:400px;text-align:center;-webkit-text-stroke:0.1px currentColor;">10</span>
<span id="t70" class="t" style="font-size:10px;color:#444;top:312.91px;line-height:12.0px;letter-spacing:-0.491px;left:-189.65px;width:400px;text-align:center;-webkit-text-stroke:0.1px currentColor;">11</span>
<span id="t71" class="t" style="font-size:10px;color:#444;top:327.54px;line-height:12.0px;letter-spacing:-1.225px;left:-190.01px;width:400px;text-align:center;-webkit-text-stroke:0.1px currentColor;">12</span>
<span id="t72" class="t" style="font-size:10px;color:#444;top:342.17px;line-height:12.0px;letter-spacing:-1.225px;left:-190.01px;width:400px;text-align:center;-webkit-text-stroke:0.1px currentColor;">13</span>
<span id="t73" class="t" style="font-size:10px;color:#444;top:356.81px;line-height:12.0px;letter-spacing:-1.225px;left:-190.01px;width:400px;text-align:center;-webkit-text-stroke:0.1px currentColor;">14</span>
<span id="t74" class="t" style="font-size:10px;color:#444;top:371.44px;line-height:12.0px;letter-spacing:-1.225px;left:-190.01px;width:400px;text-align:center;-webkit-text-stroke:0.1px currentColor;">15</span>
<span id="t75" class="t" style="font-size:10px;color:#444;top:386.06px;line-height:12.0px;letter-spacing:-1.225px;left:-190.01px;width:400px;text-align:center;-webkit-text-stroke:0.1px currentColor;">16</span>
<span id="t76" class="t" style="font-size:10px;color:#444;top:400.69px;line-height:12.0px;letter-spacing:-1.225px;left:-190.01px;width:400px;text-align:center;-webkit-text-stroke:0.1px currentColor;">17</span>
<span id="t77" class="t" style="font-size:10px;color:#444;top:415.33px;line-height:12.0px;letter-spacing:-1.225px;left:-190.01px;width:400px;text-align:center;-webkit-text-stroke:0.1px currentColor;">18</span>
<span id="t78" class="t" style="font-size:10px;color:#444;top:429.96px;line-height:12.0px;letter-spacing:-1.225px;left:-190.01px;width:400px;text-align:center;-webkit-text-stroke:0.1px currentColor;">19</span>
<span id="t79" class="t" style="font-size:10px;color:#444;top:444.59px;line-height:12.0px;letter-spacing:-1.225px;left:-190.01px;width:400px;text-align:center;-webkit-text-stroke:0.1px currentColor;">20</span>
<div style="left:1.3px;top:457.6px;width:18.2px;height:5.2px;overflow:hidden;"><span class="t" style="position:absolute;left:-190.4px;width:400px;text-align:center;top:1.2px;font-size:10px;letter-spacing:-0.6px;line-height:12px;color:#444">21</span></div>
<div style="left:19.5px;top:163.4px;width:150.5px;height:14.63px;background:#70ad47;"></div>
<svg style="left:0px;top:0px;" width="730" height="500" viewBox="0 0 730 500"><g fill="none" stroke-width="1"><path d="M19.5 178.03H170" stroke="#2a2a2a"/><path d="M19.5 192.66H170" stroke="#2a2a2a"/><path d="M19.5 207.29H170" stroke="#2a2a2a"/><path d="M19.5 221.92H170" stroke="#2a2a2a"/><path d="M19.5 236.55H170" stroke="#2a2a2a"/><path d="M19.5 251.18H170" stroke="#2a2a2a"/><path d="M19.5 265.81H170" stroke="#2a2a2a"/><path d="M19.5 280.44H170" stroke="#2a2a2a"/><path d="M19.5 178.03V280.44" stroke="#2a2a2a"/><path d="M111.2 178.03V280.44" stroke="#2a2a2a"/><path d="M170 178.03V280.44" stroke="#2a2a2a"/><path d="M111.2 163.4V178.03" stroke="#2a2a2a"/><path d="M111.2 178.03V163.4H170V178.03" stroke="#1e6b3f" stroke-width="1.2"/><path d="M111.5 178.23H169.8V190.46M167 192.66H111.5V178.23" stroke="#217346" stroke-width="1.7"/><path d="M167.8 191.06H171.6V194.46H167.8Z" fill="#217346" stroke="#fff" stroke-width="0.5"/><path d="M19.5 178.03V192.66" stroke="#217346" stroke-width="1.4"/><path d="M111.2 163.4H170" stroke="#217346" stroke-width="1.4"/></g></svg>
<span id="t80" class="t" style="font-size:9.8px;color:#0c1407;top:165.94px;line-height:11.76px;font-weight:bold;letter-spacing:-0.042px;left:-134.67px;width:400px;text-align:center;-webkit-text-stroke:0.2px currentColor;">Valor</span>
<span id="t81" class="t" style="font-size:9.8px;color:#0c1407;top:165.94px;line-height:11.76px;font-weight:bold;letter-spacing:-0.517px;left:-59.26px;width:400px;text-align:center;-webkit-text-stroke:0.2px currentColor;">Suma 32%</span>
<span id="t82" class="t" style="font-size:9.9px;color:#1c1c1c;top:181.1px;line-height:11.88px;letter-spacing:-0.642px;right:621.04px;-webkit-text-stroke:0.12px currentColor;">100</span>
<span id="t83" class="t" style="font-size:9.9px;color:#1c1c1c;top:181.1px;line-height:11.88px;letter-spacing:-0.642px;right:562.44px;-webkit-text-stroke:0.12px currentColor;">132</span>
<span id="t84" class="t" style="font-size:9.9px;color:#1c1c1c;top:195.74px;line-height:11.88px;letter-spacing:-0.642px;right:621.04px;-webkit-text-stroke:0.12px currentColor;">589</span>
<span id="t85" class="t" style="font-size:9.9px;color:#1c1c1c;top:195.74px;line-height:11.88px;letter-spacing:-0.642px;right:562.44px;-webkit-text-stroke:0.12px currentColor;">777</span>
<span id="t86" class="t" style="font-size:9.9px;color:#1c1c1c;top:210.37px;line-height:11.88px;letter-spacing:-0.642px;right:621.04px;-webkit-text-stroke:0.12px currentColor;">400</span>
<span id="t87" class="t" style="font-size:9.9px;color:#1c1c1c;top:210.37px;line-height:11.88px;letter-spacing:-0.642px;right:562.44px;-webkit-text-stroke:0.12px currentColor;">528</span>
<span id="t88" class="t" style="font-size:9.9px;color:#1c1c1c;top:225.0px;line-height:11.88px;letter-spacing:-0.642px;right:621.04px;-webkit-text-stroke:0.12px currentColor;">256</span>
<span id="t89" class="t" style="font-size:9.9px;color:#1c1c1c;top:225.0px;line-height:11.88px;letter-spacing:-0.642px;right:562.44px;-webkit-text-stroke:0.12px currentColor;">338</span>
<span id="t90" class="t" style="font-size:9.9px;color:#1c1c1c;top:239.62px;line-height:11.88px;letter-spacing:-0.642px;right:621.04px;-webkit-text-stroke:0.12px currentColor;">104</span>
<span id="t91" class="t" style="font-size:9.9px;color:#1c1c1c;top:239.62px;line-height:11.88px;letter-spacing:-0.642px;right:562.44px;-webkit-text-stroke:0.12px currentColor;">137</span>
<span id="t92" class="t" style="font-size:9.9px;color:#1c1c1c;top:254.25px;line-height:11.88px;letter-spacing:-0.642px;right:621.04px;-webkit-text-stroke:0.12px currentColor;">205</span>
<span id="t93" class="t" style="font-size:9.9px;color:#1c1c1c;top:254.25px;line-height:11.88px;letter-spacing:-0.642px;right:562.44px;-webkit-text-stroke:0.12px currentColor;">271</span>
<span id="t94" class="t" style="font-size:9.9px;color:#1c1c1c;top:268.88px;line-height:11.88px;letter-spacing:-0.364px;right:620.76px;-webkit-text-stroke:0.12px currentColor;">300,00</span>
<span id="t95" class="t" style="font-size:9.9px;color:#1c1c1c;top:268.88px;line-height:11.88px;letter-spacing:-0.642px;right:562.44px;-webkit-text-stroke:0.12px currentColor;">396</span>
<div style="left:171.4px;top:282.2px;width:14.6px;height:13.6px;background:#fafafa;border:1px solid #c8c8c8;"></div>
<svg style="left:173.4px;top:284px;" width="11" height="10" viewBox="0 0 11 10"><path d="M0.6 0.6H6.4V3.4H0.6Z" fill="#5b89c4"/><path d="M0.6 4.2H6.4V7H0.6Z" fill="#fff" stroke="#999" stroke-width="0.6"/><path d="M8.4 5.4V9.2M6.5 7.3H10.3" stroke="#666" stroke-width="0.9"/></svg>
<div style="left:716.2px;top:151.2px;width:10.8px;height:10.6px;background:#fff;border:1px solid #c4c4c4;"></div>
<svg style="left:718.6px;top:154.6px;" width="6" height="4" viewBox="0 0 6 4"><path d="M0.4 3.2L3 0.4L5.6 3.2Z" fill="#666"/></svg>
<div style="left:716.2px;top:162px;width:10.8px;height:275.4px;background:#fff;border:1px solid #c4c4c4;"></div>
<div style="left:716.2px;top:451.8px;width:10.8px;height:10.4px;background:#fff;border:1px solid #c4c4c4;"></div>
<svg style="left:718.8px;top:456.2px;" width="6" height="4" viewBox="0 0 6 4"><path d="M0.4 0.6H5.6L3 3.4Z" fill="#777"/></svg>
<div style="left:1.3px;top:463.4px;width:727.5px;height:19.6px;background:#e6e6e6;"></div>
<div style="left:1.3px;top:462.7px;width:712.7px;height:1px;background:#c2c2c2;"></div>
<div style="left:1.3px;top:462.6px;width:73px;height:1px;background:#b4b4b4;"></div>
<div style="left:74.2px;top:463px;width:52.4px;height:18.4px;background:#f5f5f5;border-left:1px solid #c2c2c2;border-right:1px solid #c2c2c2;"></div>
<div style="left:74.2px;top:479.6px;width:52.4px;height:1.6px;background:#217346;"></div>
<span id="t96" class="t" style="font-size:9.2px;color:#1c6a3f;top:467.58px;line-height:11.04px;font-weight:bold;letter-spacing:-0.033px;left:82.5px;-webkit-text-stroke:0.2px currentColor;">Solvetic</span>
<span id="t97" class="t" style="font-size:9.2px;color:#444;top:467.58px;line-height:11.04px;letter-spacing:0.146px;left:135.9px;-webkit-text-stroke:0.1px currentColor;">Hoja2</span>
<span id="t98" class="t" style="font-size:9.2px;color:#444;top:467.58px;line-height:11.04px;letter-spacing:0.171px;left:179.7px;-webkit-text-stroke:0.1px currentColor;">Hoja4</span>
<div style="left:170px;top:465.6px;width:1px;height:14px;background:#b0b0b0;"></div>
<div style="left:213px;top:465.6px;width:1px;height:14px;background:#b0b0b0;"></div>
<svg style="left:18px;top:467px;" width="30" height="11" viewBox="0 0 30 11"><g fill="none" stroke="#c0c0c0" stroke-width="1.1"><path d="M5.4 3.2L3 5.4L5.4 7.6"/><path d="M23.6 3.2L26 5.4L23.6 7.6"/></g></svg>
<svg style="left:237.4px;top:466.6px;" width="13" height="13" viewBox="0 0 13 13"><g fill="none" stroke="#666" stroke-width="0.9"><circle cx="6.2" cy="6.2" r="5.2"/><path d="M6.2 3.4V9M3.4 6.2H9"/></g></svg>
<div style="left:438.2px;top:470px;width:1px;height:1px;background:#999;"></div>
<div style="left:438.2px;top:472.4px;width:1px;height:1px;background:#999;"></div>
<div style="left:438.2px;top:474.8px;width:1px;height:1px;background:#999;"></div>
<div style="left:450.2px;top:468px;width:11.2px;height:10.8px;background:#fff;border:1px solid #c4c4c4;"></div>
<svg style="left:453.6px;top:470.6px;" width="4" height="6" viewBox="0 0 4 6"><path d="M3.4 0.4L0.6 2.9L3.4 5.4Z" fill="#555"/></svg>
<div style="left:461.2px;top:468px;width:219.6px;height:10.8px;background:#fff;border:1px solid #c4c4c4;"></div>
<div style="left:702.4px;top:468px;width:11.2px;height:10.8px;background:#fff;border:1px solid #c4c4c4;"></div>
<svg style="left:706.6px;top:470.6px;" width="4" height="6" viewBox="0 0 4 6"><path d="M0.6 0.4L3.4 2.9L0.6 5.4Z" fill="#777"/></svg>
<div style="left:1.3px;top:483px;width:727.5px;height:15.4px;background:#f3f3f3;"></div>
<div style="left:1.3px;top:482.6px;width:727.5px;height:0.8px;background:#d8d8d8;"></div>
<span id="t99" class="t" style="font-size:8.6px;color:#555;top:486.34px;line-height:10.32px;letter-spacing:-0.339px;left:7px;">Listo</span>
<svg style="left:57.6px;top:486.4px;" width="11" height="10" viewBox="0 0 11 10"><circle cx="2" cy="2" r="1.5" fill="#666"/><path d="M4.6 1H9.6V9H0.8V4.6" fill="none" stroke="#666" stroke-width="0.9"/><path d="M3 5.6V9M5.2 5.6V9M7.4 5.6V9" stroke="#999" stroke-width="0.8"/></svg>
<div style="left:506.3px;top:483.4px;width:26.8px;height:15px;background:#c6c6c6;"></div>
<svg style="left:514.2px;top:485.8px;" width="11" height="10" viewBox="0 0 11 10"><g fill="none" stroke="#555" stroke-width="0.9"><path d="M0.6 0.6H10.2V9.6H0.6Z"/><path d="M3.8 0.6V9.6M7 0.6V9.6M0.6 3.6H10.2M0.6 6.6H10.2"/></g></svg>
<svg style="left:542px;top:485.8px;" width="11" height="10" viewBox="0 0 11 10"><g fill="none" stroke="#666" stroke-width="0.9"><path d="M0.6 0.6H10.4V9.6H0.6Z"/><path d="M3 2.6H8V7.6H3Z"/><path d="M5.5 2.6V7.6" stroke-width="0.6"/></g></svg>
<svg style="left:569.6px;top:485.8px;" width="11" height="10" viewBox="0 0 11 10"><g fill="none" stroke="#666" stroke-width="0.9"><path d="M0.6 0.6H10.4V9.6H0.6Z"/><path d="M3.4 0.6V5.6H7.2V0.6M7.2 5.6H10.4"/></g></svg>
<div style="left:592.8px;top:490.2px;width:4.2px;height:1.2px;background:#444;"></div>
<div style="left:600.4px;top:490.4px;width:72px;height:0.9px;background:#a8a8a8;"></div>
<div style="left:635.3px;top:486.2px;width:2.4px;height:9.4px;background:#444;"></div>
<div style="left:675.8px;top:490.2px;width:6px;height:1.3px;background:#444;"></div>
<div style="left:678.15px;top:487.85px;width:1.3px;height:6px;background:#444;"></div>
<span id="t100" class="t" style="font-size:8.4px;color:#666;top:486.46px;line-height:10.08px;letter-spacing:-0.688px;left:694.2px;">100 %</span>
<svg style="left:0px;top:0px;" width="730" height="500" viewBox="0 0 730 500"><defs><filter id="sh" x="-30%" y="-30%" width="160%" height="160%"><feGaussianBlur stdDeviation="2.2"/></filter></defs><polygon points="243.3,135.8 276.3,149 267.3,155.8 282.8,182.8 264.6,193.3 249.3,165.8 238.8,170.8" fill="#000" opacity="0.38" filter="url(#sh)" transform="translate(-3.5,2)"/><polygon points="243.3,135.8 276.3,149 267.3,155.8 282.8,182.8 264.6,193.3 249.3,165.8 238.8,170.8" fill="#f65a5a" opacity="0.96"/></svg>
<span id="t101" class="t" style="font-size:9.4px;color:rgba(50,8,8,0.75);top:151.46px;line-height:11.28px;left:57.6px;width:400px;text-align:center;transform:scaleX(0.86);transform-origin:50% 50%;-webkit-text-stroke:0.1px currentColor;">D</span>
<svg style="left:0px;top:0px;" width="730" height="500" viewBox="0 0 730 500"><defs><radialGradient id="wg" cx="50%" cy="50%" r="50%"><stop offset="0" stop-color="#f7f8f9" stop-opacity="0.84"/><stop offset="0.9" stop-color="#f5f7f9" stop-opacity="0.8"/><stop offset="0.97" stop-color="#dfeaf3" stop-opacity="0.7"/><stop offset="1" stop-color="#dfeaf3" stop-opacity="0"/></radialGradient></defs>
<circle cx="704.7" cy="474" r="28.2" fill="url(#wg)"/>
<path d="M712.8 481C713.4 476.5 716.4 472.5 717.3 466C718.3 457.5 713.2 450 704.5 449.3C695.5 448.6 686.5 455.5 685.6 465.5C684.8 474 692 479 698.8 481.2C701.5 482.2 703.8 483.5 705.3 485.2" fill="none" stroke="#5a8ec8" stroke-width="1.7" stroke-linecap="round" opacity="0.92"/>
<path d="M712.6 480.8C713.2 483 714.6 484.4 714.6 485.6C713.6 487.2 709.2 486.2 706.4 487.2C710.2 486.8 716 485.4 718 486.8C720 489 713.4 493.4 707 495.6" fill="none" stroke="#3e74b8" stroke-width="1.6" stroke-linecap="round" stroke-linejoin="round" opacity="0.92"/></svg>
</div></body></html>
